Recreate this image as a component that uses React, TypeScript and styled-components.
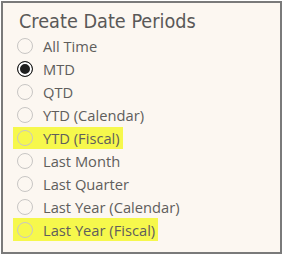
import styled, { createGlobalStyle } from "styled-components";

const GlobalStyle = createGlobalStyle`
  html, body {
    margin: 0;
    padding: 0;
    background: #ffffff;
  }
`;

const items = [
  { label: "All Time", checked: false, marked: false },
  { label: "MTD", checked: true, marked: false },
  { label: "QTD", checked: false, marked: false },
  { label: "YTD (Calendar)", checked: false, marked: false },
  { label: "YTD (Fiscal)", checked: false, marked: true },
  { label: "Last Month", checked: false, marked: false },
  { label: "Last Quarter", checked: false, marked: false },
  { label: "Last Year (Calendar)", checked: false, marked: false },
  { label: "Last Year (Fiscal)", checked: false, marked: true },
];

export default function App() {
  return (
    <>
      <GlobalStyle />
      <Frame>
        <Panel>
          <Title>Create Date Periods</Title>
          <List>
            {items.map((item) => (
              <Row key={item.label} $marked={item.marked}>
                <Radio $checked={item.checked} />
                <Label>{item.label}</Label>
              </Row>
            ))}
          </List>
        </Panel>
      </Frame>
    </>
  );
}

const Frame = styled.div`
  width: 283px;
  height: 256px;
  padding: 1px 1px 2px 1px;
  box-sizing: border-box;
`;

const Panel = styled.div`
  height: 100%;
  box-sizing: border-box;
  border: 2px solid #7a7a7a;
  background: #fcf7f1;
  padding: 6px 0 0 10px;
`;

const Title = styled.div`
  font-family: "DejaVu Sans Condensed", "Liberation Sans", sans-serif;
  font-size: 19.7px;
  color: #5a5958;
  padding-left: 6px;
  height: 26px;
  line-height: 26px;
`;

const List = styled.div`
  display: flex;
  flex-direction: column;
`;

const Row = styled.div<{ $marked: boolean }>`
  display: flex;
  align-items: center;
  gap: 10px;
  height: 22.9px;
  align-self: flex-start;
  padding: 0 3px 0 4px;
  background: ${(p) => (p.$marked ? "#f6f84c" : "transparent")};
`;

const Radio = styled.span<{ $checked: boolean }>`
  flex: none;
  width: 16px;
  height: 16px;
  box-sizing: border-box;
  border-radius: 50%;
  border: ${(p) => (p.$checked ? "1.5px solid #1f1f1f" : "1.5px solid #c8c6c4")};
  background: ${(p) => (p.$checked ? "#1f1f1f" : "transparent")};
  box-shadow: ${(p) => (p.$checked ? "inset 0 0 0 2px #ffffff" : "none")};
`;

const Label = styled.span`
  font-family: "Open Sans", "Liberation Sans", sans-serif;
  font-size: 14.7px;
  color: #605e5c;
`;
